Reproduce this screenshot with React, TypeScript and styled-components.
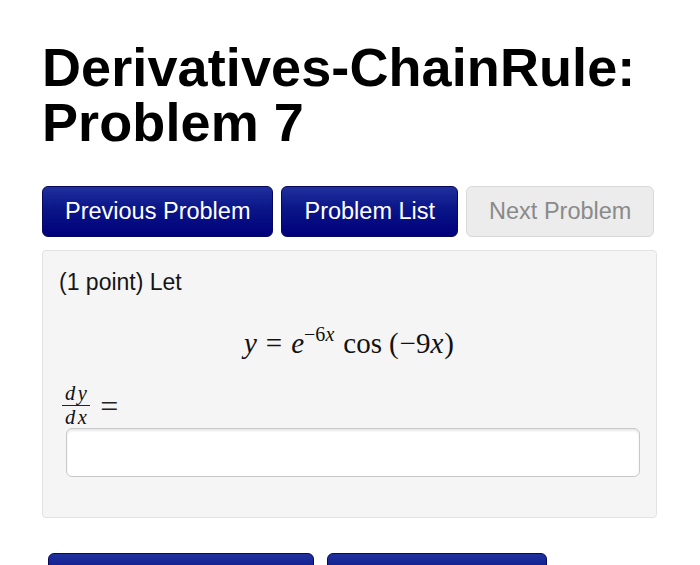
import React from 'react'
import styled, { createGlobalStyle } from 'styled-components'

const GlobalStyle = createGlobalStyle`
  html, body {
    margin: 0;
    padding: 0;
    background: #ffffff;
  }
  body {
    font-family: "Liberation Sans", Arial, Helvetica, sans-serif;
    color: #111;
  }
`

const App: React.FC = () => (
  <Page>
    <GlobalStyle />
    <Title>
      Derivatives-ChainRule:
      <br />
      Problem 7
    </Title>

    <NavRow>
      <NavButton>Previous Problem</NavButton>
      <NavButton>Problem List</NavButton>
      <NavButton disabled>Next Problem</NavButton>
    </NavRow>

    <ProblemPanel>
      <Intro>(1 point) Let</Intro>
      <Equation>
        <Var>y</Var>
        <Op>=</Op>
        <Var>e</Var>
        <Sup>
          −6<Var>x</Var>
        </Sup>
        <Fn>cos</Fn>
        <Paren>(</Paren>−9<Var>x</Var>
        <Paren>)</Paren>
      </Equation>

      <AnswerLabel>
        <Fraction>
          <Numerator>dy</Numerator>
          <Denominator>dx</Denominator>
        </Fraction>
        <Equals>=</Equals>
      </AnswerLabel>
      <AnswerInput type="text" aria-label="answer" />
    </ProblemPanel>

    <SubmitRow>
      <NavButton $pad={23.5}>Preview My Answers</NavButton>
      <NavButton $pad={25}>Submit Answers</NavButton>
    </SubmitRow>
  </Page>
)

const Page = styled.main`
  width: 615px;
  padding: 40px 0 0 42px;
`

const Title = styled.h1`
  margin: 0;
  font-family: "Liberation Sans", Arial, Helvetica, sans-serif;
  font-weight: 700;
  font-size: 54px;
  line-height: 55px;
  color: #000;
  letter-spacing: 0.1px;
`

const NavRow = styled.div`
  display: flex;
  gap: 8px;
  margin-top: 36px;
`

const NavButton = styled.button<{ $pad?: number }>`
  height: 51px;
  padding: 0 ${p => p.$pad ?? 22}px;
  font-family: "Liberation Sans", Arial, Helvetica, sans-serif;
  font-size: 23.5px;
  color: #ffffff;
  background: linear-gradient(to bottom, #1f309c 0%, #0a1588 45%, #00007a 100%);
  border: 1px solid #07075e;
  border-radius: 6px;
  white-space: nowrap;
  cursor: pointer;

  &:disabled {
    color: #8a8a8a;
    background: #ececec;
    border-color: #d8d8d8;
    cursor: default;
  }
`

const ProblemPanel = styled.section`
  margin-top: 13px;
  padding: 15px 16px 40px 16px;
  background: #f5f5f5;
  border: 1px solid #e2e2e2;
  border-radius: 4px;
`

const Intro = styled.p`
  margin: 0;
  font-size: 23px;
  line-height: 32px;
  color: #151515;
`

const Equation = styled.div`
  margin-top: 31px;
  text-align: center;
  font-family: "Liberation Serif", "Times New Roman", serif;
  font-size: 29px;
  line-height: 29px;
  color: #111;
`

const Var = styled.i`
  font-style: italic;
`

const Op = styled.span`
  margin: 0 9px;
`

const Sup = styled.sup`
  font-size: 20px;
  vertical-align: 12px;
  line-height: 0;
  margin-right: 9px;
`

const Fn = styled.span`
  margin-right: 6px;
`

const Paren = styled.span`
  margin: 0 1px;
`

const AnswerLabel = styled.div`
  display: flex;
  align-items: center;
  margin-top: 25px;
  padding-left: 3px;
  font-family: "Liberation Serif", "Times New Roman", serif;
`

const Fraction = styled.span`
  display: inline-flex;
  flex-direction: column;
  align-items: center;
  font-style: italic;
  font-size: 20.5px;
  line-height: 21px;
  letter-spacing: 2.5px;
`

const Numerator = styled.span`
  padding: 0 1px 1px 3px;
  border-bottom: 1.5px solid #222;
`

const Denominator = styled.span`
  padding: 1px 1px 0 3px;
`

const Equals = styled.span`
  margin-left: 10px;
  font-size: 32px;
  line-height: 32px;
  color: #222;
`

const AnswerInput = styled.input`
  display: block;
  box-sizing: border-box;
  width: 574px;
  height: 49px;
  margin: 0 0 0 7px;
  padding: 4px 10px;
  font-size: 20px;
  background: #ffffff;
  border: 1px solid #c8c8c8;
  border-radius: 6px;
  box-shadow: inset 0 2px 2px rgba(0, 0, 0, 0.09);
  outline: none;
`

const SubmitRow = styled.div`
  display: flex;
  gap: 13px;
  margin: 35px 0 0 6px;
`

export default App
